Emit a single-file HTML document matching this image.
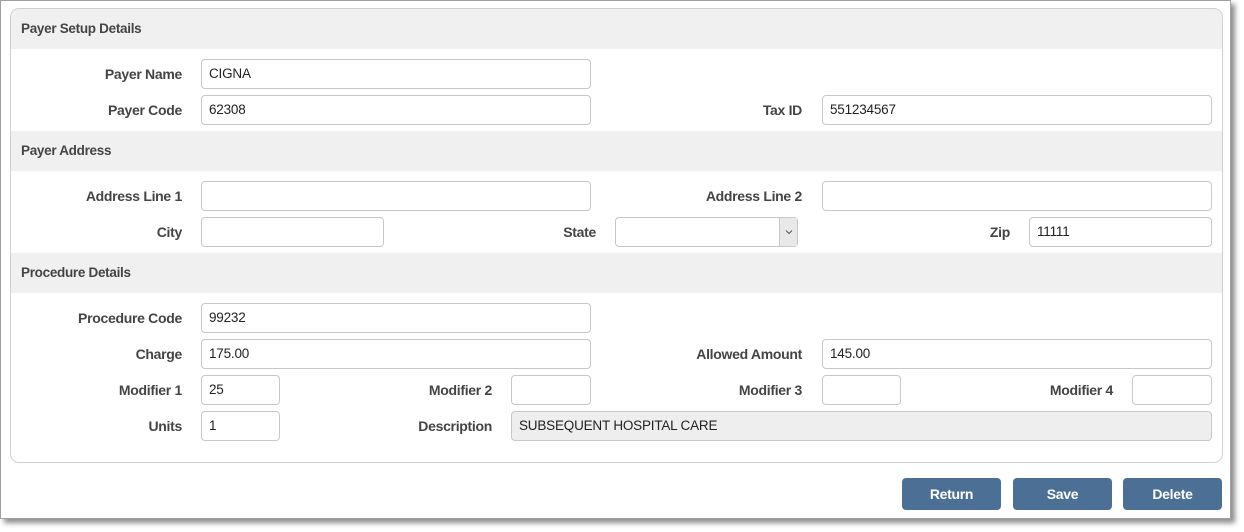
<!DOCTYPE html>
<html><head><style>
body{margin:0;width:1244px;height:532px;background:#fff;position:relative;overflow:hidden;font-family:"Liberation Sans",Arial,sans-serif}
.frame{position:absolute;left:0;top:0;width:1229px;height:517px;border:1px solid #a0a0a0;box-shadow:4px 4px 5px rgba(0,0,0,.45);background:#fff}
.panel{position:absolute;left:10px;top:8px;width:1211px;height:453px;border:1px solid #d0d0d0;border-radius:9px;overflow:hidden}
.hd{position:absolute;left:0;width:1211px;height:40px;background:#f0f0f0;font-weight:bold;font-size:13.5px;color:#444;line-height:40px;text-indent:10px;letter-spacing:-.3px}
.lb{position:absolute;font-weight:bold;font-size:14px;color:#444;text-align:right;line-height:30px;letter-spacing:-.3px}
.in{position:absolute;border:1px solid #c8c8c8;border-radius:4px;background:#fff;font-size:13.5px;color:#222;line-height:28px;padding-left:7px;box-sizing:border-box;height:30px;letter-spacing:-.2px}
.btn{position:absolute;top:478px;width:99px;height:32px;background:#4c6f95;border-radius:4px;color:#fff;font-weight:bold;font-size:14px;text-align:center;line-height:32px;letter-spacing:-.3px}
</style></head><body>
<div class="frame"></div>
<div class="panel">
<div class="hd" style="top:0">Payer Setup Details</div>
<div class="hd" style="top:122px">Payer Address</div>
<div class="hd" style="top:244px">Procedure Details</div>
</div>
<div style="position:absolute;left:0;top:1px;width:1244px">
<div class="lb" style="left:20px;width:162px;top:58px">Payer Name</div>
<div class="in" style="left:201px;top:58px;width:390px">CIGNA</div>
<div class="lb" style="left:20px;width:162px;top:94px">Payer Code</div>
<div class="in" style="left:201px;top:94px;width:390px">62308</div>
<div class="lb" style="left:600px;width:202px;top:94px">Tax ID</div>
<div class="in" style="left:822px;top:94px;width:390px">551234567</div>

<div class="lb" style="left:20px;width:162px;top:180px">Address Line 1</div>
<div class="in" style="left:201px;top:180px;width:390px"></div>
<div class="lb" style="left:600px;width:202px;top:180px">Address Line 2</div>
<div class="in" style="left:822px;top:180px;width:390px"></div>
<div class="lb" style="left:20px;width:162px;top:216px">City</div>
<div class="in" style="left:201px;top:216px;width:183px"></div>
<div class="lb" style="left:400px;width:196px;top:216px">State</div>
<div class="in" style="left:615px;top:216px;width:183px"><div style="position:absolute;right:0;top:0;width:17px;height:28px;background:#e8e8e8;border-left:1px solid #c8c8c8;text-align:center"><svg width="10" height="28" viewBox="0 0 10 28"><path d="M2 12.5 L5 15.5 L8 12.5" fill="none" stroke="#555" stroke-width="1"/></svg></div></div>
<div class="lb" style="left:900px;width:110px;top:216px">Zip</div>
<div class="in" style="left:1029px;top:216px;width:183px">11111</div>

<div class="lb" style="left:20px;width:162px;top:302px">Procedure Code</div>
<div class="in" style="left:201px;top:302px;width:390px">99232</div>
<div class="lb" style="left:20px;width:162px;top:338px">Charge</div>
<div class="in" style="left:201px;top:338px;width:390px">175.00</div>
<div class="lb" style="left:600px;width:202px;top:338px">Allowed Amount</div>
<div class="in" style="left:822px;top:338px;width:390px">145.00</div>
<div class="lb" style="left:20px;width:162px;top:374px">Modifier 1</div>
<div class="in" style="left:201px;top:374px;width:79px">25</div>
<div class="lb" style="left:300px;width:192px;top:374px">Modifier 2</div>
<div class="in" style="left:511px;top:374px;width:80px"></div>
<div class="lb" style="left:600px;width:202px;top:374px">Modifier 3</div>
<div class="in" style="left:822px;top:374px;width:79px"></div>
<div class="lb" style="left:920px;width:193px;top:374px">Modifier 4</div>
<div class="in" style="left:1132px;top:374px;width:80px"></div>
<div class="lb" style="left:20px;width:162px;top:410px">Units</div>
<div class="in" style="left:201px;top:410px;width:79px">1</div>
<div class="lb" style="left:300px;width:192px;top:410px">Description</div>
<div class="in" style="left:511px;top:410px;width:701px;background:#eee">SUBSEQUENT HOSPITAL CARE</div>
</div>

<div class="btn" style="left:902px">Return</div>
<div class="btn" style="left:1013px">Save</div>
<div class="btn" style="left:1123px">Delete</div>
</body></html>
